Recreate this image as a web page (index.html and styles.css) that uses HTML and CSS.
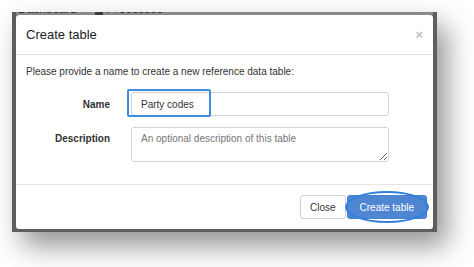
FILE: index.html
```html
<!DOCTYPE html>
<html lang="en">
<head>
    <meta charset="UTF-8">
    <title>Create table</title>
    <link rel="stylesheet" href="styles.css">
</head>
<body>
<div class="frame">
    <!-- cropped page behind the dialog -->
    <div class="page-strip">
        <span class="nav-item">Dashboard</span>
        <span class="nav-item"><span class="nav-icon"></span>Processes</span>
    </div>
    <div class="modal-content">
        <div class="modal-header">
            <h2>Create table</h2>
            <span class="close">&times;</span>
        </div>
        <div class="modal-body">
            <p>Please provide a name to create a new reference data table:</p>
            <form class="form-grid">
                <label for="name">Name</label>
                <div class="field">
                    <input type="text" id="name" name="name" value="Party codes"/>
                    <span class="focus-mark"></span>
                </div>
                <label for="description" class="top">Description</label>
                <div class="field">
                    <textarea id="description" name="description" placeholder="An optional description of this table"></textarea>
                </div>
            </form>
        </div>
        <div class="modal-footer">
            <button type="button" class="btn">Close</button>
            <button type="button" class="btn btn-primary">Create table<span class="ring"></span></button>
        </div>
    </div>
</div>
</body>
</html>
```

FILE: styles.css
```css
html, body {
    height: 100%;
}

body {
    margin: 0;
    background-color: #fff;
    font-family: "Liberation Sans", Arial, sans-serif;
    color: #333;
}

.frame {
    width: 417px;
    margin: 12px 0 0 12px;
    padding: 0 4px 3px 4px;
    background-color: #5e5e5e;
    box-shadow: 10px 14px 26px rgba(0, 0, 0, 0.42);
}

.page-strip {
    height: 3px;
    overflow: hidden;
    background-color: #8a8a8a;
    display: flex;
    gap: 18px;
    padding-left: 2px;
    font-size: 12px;
    line-height: 12px;
    color: #2a2a2a;
}

.nav-item {
    display: flex;
    gap: 4px;
    margin-top: -9px;
}

.nav-icon {
    width: 8px;
    height: 10px;
    margin-top: 2px;
    background-color: #3a3a3a;
}

.modal-content {
    background-color: #fff;
    border-radius: 3px;
}

.modal-header {
    height: 39px;
    display: flex;
    align-items: center;
    justify-content: space-between;
    padding: 0 10px;
    border-bottom: 1px solid #e5e5e5;
}

.modal-header h2 {
    margin: 0;
    font-size: 13px;
    font-weight: normal;
    color: #222;
}

.close {
    font-size: 13px;
    font-weight: bold;
    color: #c4c4c4;
}

.modal-body {
    padding: 10px 44px 22px 10px;
    font-size: 10px;
}

.modal-body p {
    margin: 0 0 13px;
    line-height: 14px;
}

.form-grid {
    display: grid;
    grid-template-columns: 84px 1fr;
    column-gap: 21px;
    row-gap: 11px;
    align-items: center;
}

.form-grid label {
    text-align: right;
    font-weight: bold;
    color: #333;
}

.form-grid label.top {
    align-self: start;
    padding-top: 6px;
}

.field {
    position: relative;
}

input[type="text"], textarea {
    display: block;
    width: 100%;
    box-sizing: border-box;
    border: 1px solid #d4d4d4;
    border-radius: 3px;
    padding: 0 9px;
    font-family: "Liberation Sans", Arial, sans-serif;
    font-size: 10px;
    color: #333;
    margin: 0;
}

input[type="text"] {
    height: 24px;
}

textarea {
    height: 35px;
    padding-top: 5px;
    resize: vertical;
}

textarea::placeholder {
    color: #777;
}

.focus-mark {
    position: absolute;
    left: -4px;
    top: -3px;
    width: 84px;
    height: 28px;
    box-sizing: border-box;
    border: 2px solid #3d8de0;
    border-radius: 2px;
}

.modal-footer {
    display: flex;
    justify-content: flex-end;
    gap: 1px;
    padding: 10px 6px 10px;
    border-top: 1px solid #e5e5e5;
}

.btn {
    position: relative;
    height: 24px;
    padding: 0 9px;
    border: 1px solid #d0d0d0;
    border-radius: 3px;
    background-color: #fff;
    font-family: "Liberation Sans", Arial, sans-serif;
    font-size: 10px;
    color: #333;
}

.btn-primary {
    padding: 0 12px;
    border-color: #4a80cc;
    background-color: #4f86d2;
    color: #fff;
}

.ring {
    position: absolute;
    left: -3px;
    top: -5px;
    width: 84px;
    height: 32px;
    box-sizing: border-box;
    border: 2.5px solid #2e7fe0;
    border-radius: 50%;
}
```
